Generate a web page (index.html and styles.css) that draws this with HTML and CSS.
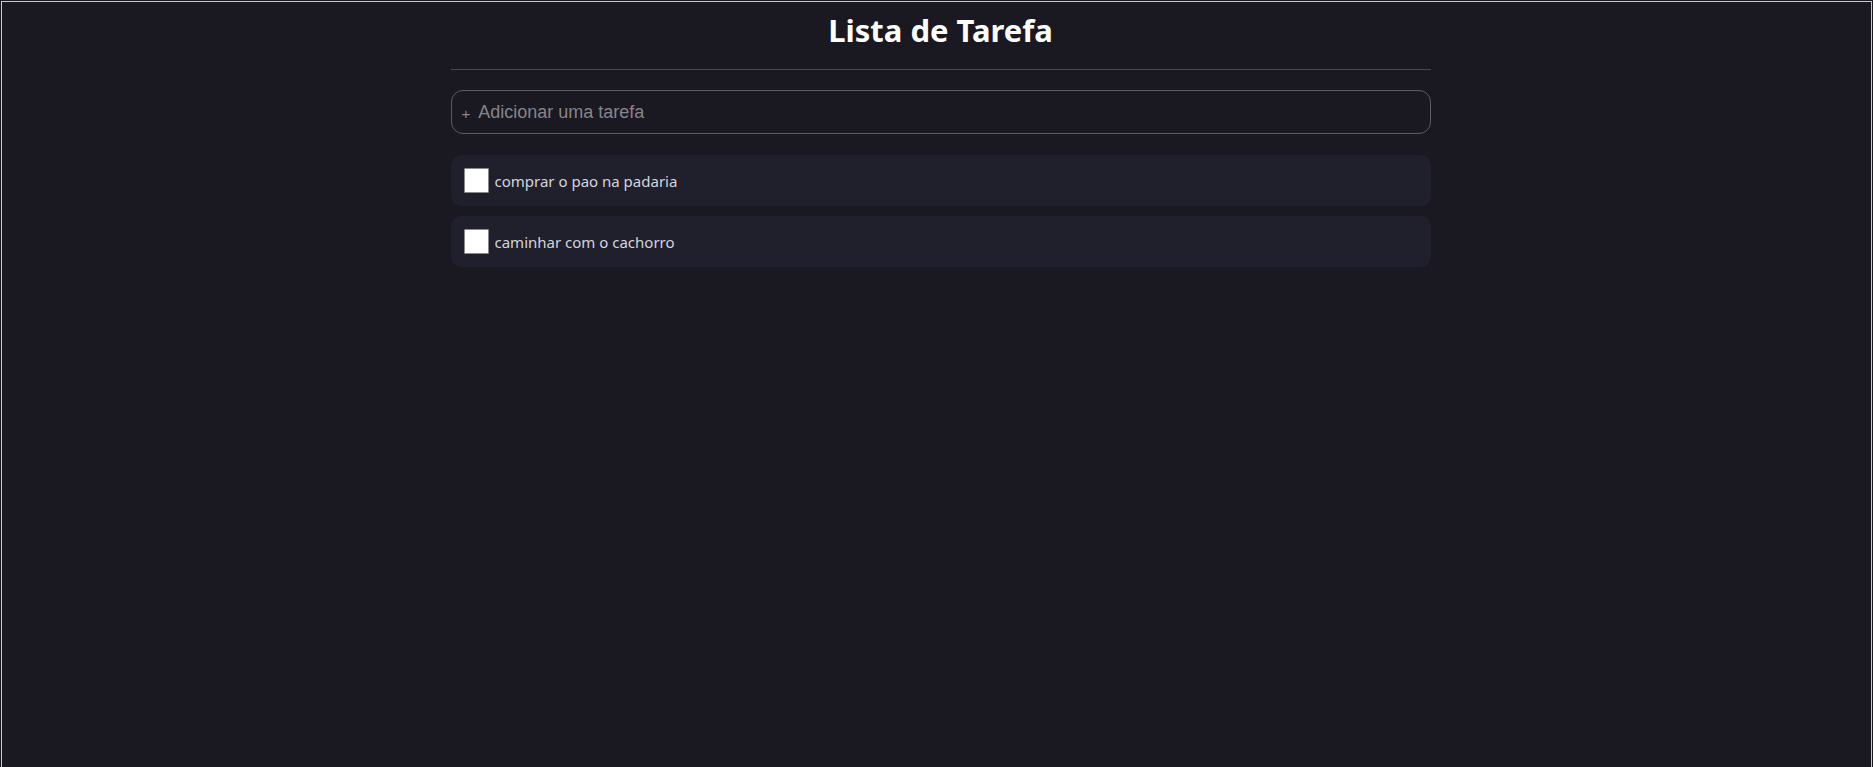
FILE: index.html
```html
<!DOCTYPE html>
<html lang="pt">
<head>
<meta charset="utf-8">
<title>Lista de Tarefa</title>
<link rel="stylesheet" href="styles.css">
</head>
<body>
<div class="frame">
  <main class="container">
    <h1 class="title">Lista de Tarefa</h1>
    <hr class="divider">
    <label class="add">
      <span class="add-plus">+</span>
      <input class="add-input" type="text" placeholder="Adicionar uma tarefa">
    </label>
    <ul class="tasks">
      <li class="task"><span class="check"></span><span class="task-text">comprar o pao na padaria</span></li>
      <li class="task"><span class="check"></span><span class="task-text">caminhar com o cachorro</span></li>
    </ul>
  </main>
</div>
</body>
</html>
```
FILE: styles.css
```css
html, body {
  margin: 0;
  padding: 0;
  background: #1a1820;
}
body {
  font-family: "Noto Sans", "DejaVu Sans", sans-serif;
  color: #d4d3da;
}
.frame {
  margin: 1px;
  border: 1px solid #c9c9c9;
  border-bottom: none;
  min-height: 800px;
  padding-left: 8px;
  background: #1a1820;
  box-sizing: border-box;
}
.container {
  width: 980px;
  margin: 0 auto;
}
.title {
  margin: 0;
  padding-top: 6px;
  height: 67px;
  box-sizing: border-box;
  text-align: center;
  color: #ffffff;
  font-size: 31px;
  font-weight: 700;
  line-height: 44px;
}
.divider {
  margin: 0;
  border: none;
  border-top: 1px solid #4a4950;
  height: 0;
}
.add {
  margin-top: 20px;
  height: 44px;
  box-sizing: border-box;
  border: 1px solid #5c5b62;
  border-radius: 12px;
  display: flex;
  align-items: center;
  padding-left: 10px;
  gap: 8px;
}
.add-plus {
  font-family: "Liberation Sans", Arial, sans-serif;
  font-size: 15px;
  color: #8a8990;
  margin-top: 2px;
}
.add-input {
  flex: 1;
  background: transparent;
  border: none;
  outline: none;
  font-family: "Liberation Sans", Arial, sans-serif;
  font-size: 18px;
  color: #d4d3da;
  padding: 0;
}
.add-input::placeholder {
  color: #86858c;
}
.tasks {
  list-style: none;
  margin: 21px 0 0;
  padding: 0;
  display: flex;
  flex-direction: column;
  gap: 10px;
}
.task {
  height: 51px;
  box-sizing: border-box;
  background: #201f2c;
  border-radius: 10px;
  display: flex;
  align-items: center;
  padding-left: 13px;
  gap: 6px;
}
.check {
  width: 25px;
  height: 25px;
  box-sizing: border-box;
  background: #ffffff;
  border: 1px solid #8a8a8a;
  border-radius: 1px;
}
.task-text {
  font-size: 15px;
  color: #d6d5dc;
}
```
